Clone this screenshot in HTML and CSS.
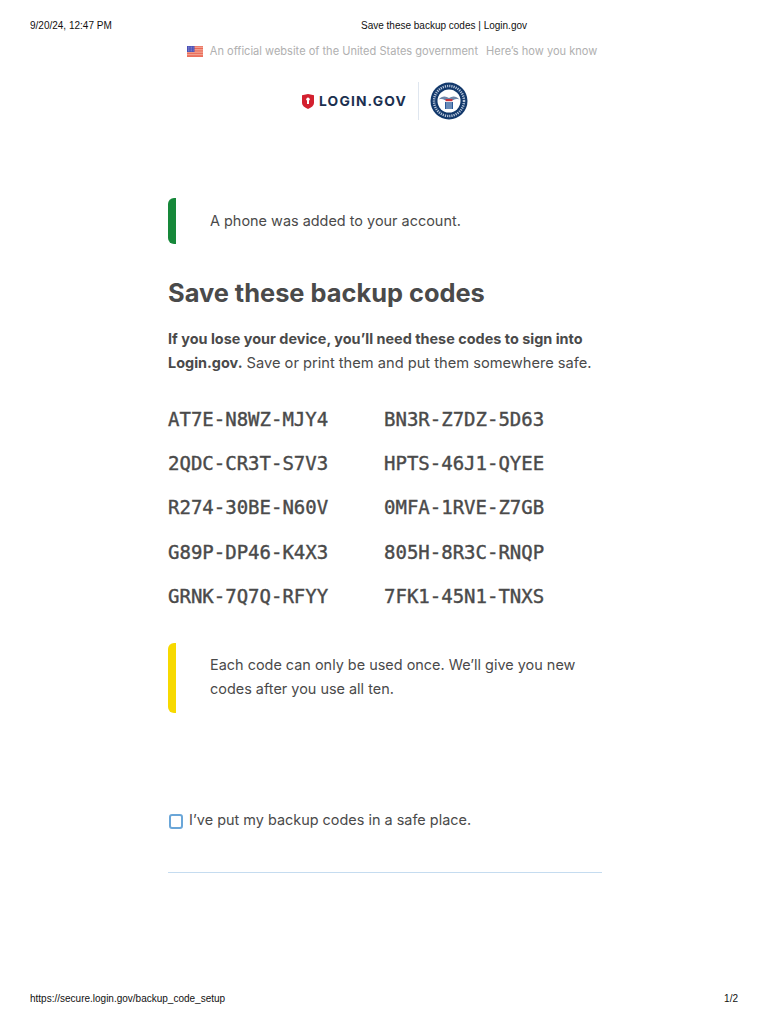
FILE: index.html
```html
<!DOCTYPE html>
<html lang="en">
<head>
<meta charset="utf-8">
<title>Save these backup codes | Login.gov</title>
<link rel="stylesheet" href="styles.css">
</head>
<body>
<div class="page">
  <header class="print-head">
    <span class="print-date">9/20/24, 12:47 PM</span>
    <span class="print-title">Save these backup codes | Login.gov</span>
  </header>
  <div class="banner">
    <svg class="flag" width="16" height="11" viewBox="0 0 16 11">
      <rect width="16" height="11" fill="#f6b7a8"/>
      <path d="M0 .8h16M0 2.500h16M0 4.200h16M0 5.900h16M0 7.600h16M0 9.300h16M0 10.600h16" stroke="#e8604c" stroke-width=".9"/>
      <rect width="7.500" height="6" fill="#4a4fb5"/>
      <path d="M1 1.200h5.500M1 3h5.500M1 4.800h5.500" stroke="#b9bce8" stroke-width=".7" stroke-dasharray=".8 .8"/>
    </svg>
    <span>An official website of the United States government</span>
    <span>Here’s how you know</span>
  </div>
  <div class="logos">
    <div class="login-logo">
      <svg width="12" height="15" viewBox="0 0 12 15">
        <path d="M0 1.200 6 0l6 1.200V9c0 2.600-2.600 4.600-6 6-3.400-1.400-6-3.400-6-6Z" fill="#d3202f"/>
        <circle cx="6" cy="5.200" r="1.700" fill="#fff"/>
        <rect x="5" y="5.500" width="2" height="4.500" fill="#fff"/>
      </svg>
      <span class="login-word">LOGIN.GOV</span>
    </div>
    <div class="logo-rule"></div>
    <svg class="seal" width="38" height="38" viewBox="0 0 38 38">
      <circle cx="19" cy="19" r="18.500" fill="#12386b"/>
      <circle cx="19" cy="19" r="11.500" fill="#fff"/>
      <circle cx="19" cy="19" r="15" fill="none" stroke="#b8c6da" stroke-width="2.500" stroke-dasharray="1.200 1"/>
      <path d="M8.500 17.500c3-3.500 7-4 10.500-1.500 3.500-2.500 7.500-2 10.500 1.500-3-.8-4.500-.4-6 .5H14.500c-1.500-.9-3-1.300-6-.5Z" fill="#6f86a8"/>
      <rect x="15.500" y="17" width="7" height="2.200" fill="#c8323c"/>
      <rect x="15" y="20" width="8" height="7" fill="#2a5a9a"/>
      <path d="M17 20v7M19 20v7M21 20v7" stroke="#fff" stroke-width=".6"/>
    </svg>
  </div>
  <main class="content">
    <div class="alert alert-success">
      <p>A phone was added to your account.</p>
    </div>
    <h1>Save these backup codes</h1>
    <p class="lead"><strong>If you lose your device, you’ll need these codes to sign into Login.gov.</strong> Save or print them and put them somewhere safe.</p>
    <div class="codes">
      <span>AT7E-N8WZ-MJY4</span><span>BN3R-Z7DZ-5D63</span>
      <span>2QDC-CR3T-S7V3</span><span>HPTS-46J1-QYEE</span>
      <span>R274-30BE-N60V</span><span>0MFA-1RVE-Z7GB</span>
      <span>G89P-DP46-K4X3</span><span>805H-8R3C-RNQP</span>
      <span>GRNK-7Q7Q-RFYY</span><span>7FK1-45N1-TNXS</span>
    </div>
    <div class="alert alert-warning">
      <p>Each code can only be used once. We’ll give you new codes after you use all ten.</p>
    </div>
    <label class="check">
      <span class="box"></span>
      <span>I’ve put my backup codes in a safe place.</span>
    </label>
    <div class="rule"></div>
  </main>
  <footer class="print-foot">
    <span>https://secure.login.gov/backup_code_setup</span>
    <span>1/2</span>
  </footer>
</div>
</body>
</html>
```
FILE: styles.css
```css
* { box-sizing: border-box; }
html, body { margin: 0; padding: 0; background: #fff; }
.page {
  width: 768px;
  height: 1024px;
  display: flex;
  flex-direction: column;
  font-family: Inter, "Liberation Sans", sans-serif;
  color: #4a4a4a;
  overflow: hidden;
}
.print-head {
  display: grid;
  grid-template-columns: 1fr;
  padding: 19px 30px 0;
  height: 42px;
  font: 10px/13px "Liberation Sans", Arial, sans-serif;
  color: #111;
}
.print-date, .print-title { grid-area: 1 / 1; }
.print-title { justify-self: center; transform: translateX(60px); }
.banner {
  display: flex;
  align-items: center;
  justify-content: center;
  gap: 8px;
  height: 18px;
  margin-left: 16px;
  font-size: 11.050px;
  color: #b0b0b0;
}
.flag { margin-right: -1px; }
.logos {
  display: flex;
  align-items: center;
  justify-content: center;
  gap: 11px;
  margin-top: 22px;
  height: 38px;
  margin-left: 2px;
}
.login-logo { display: flex; align-items: center; gap: 5px; }
.login-word {
  font-size: 13.800px;
  font-weight: 700;
  letter-spacing: 1.150px;
  color: #1b2f4f;
}
.logo-rule { width: 1px; height: 38px; background: #dfe6ef; }
.content {
  width: 434px;
  margin-left: 168px;
  flex: 1;
  display: flex;
  flex-direction: column;
}
.alert {
  border-left: 8px solid;
  border-radius: 6px;
  font-size: 14.450px;
  line-height: 24px;
}
.alert p { margin: 0; }
.alert-success { border-color: #16883a; margin-top: 78px; padding: 10.500px 0 11.500px 34px; height: 46px; }
.alert-warning { border-color: #f7d900; margin-top: 25.300px; padding: 10px 0 12px 34px; height: 70px; }
h1 {
  font-size: 25.400px;
  line-height: 32px;
  font-weight: 700;
  margin: 33px 0 0;
}
.lead {
  margin: 17.500px 0 0;
  font-size: 14.650px;
  line-height: 24px;
}
.lead strong { font-size: 14.450px; }
.codes {
  display: grid;
  grid-template-columns: 216px 216px;
  grid-auto-rows: 44.300px;
  margin-top: 22.200px;
  font: 400 19px/44px "DejaVu Sans Mono", monospace;
  -webkit-text-stroke: .4px #4a4a4a;
  color: #4a4a4a;
}
.check {
  display: flex;
  align-items: center;
  gap: 6px;
  margin-top: 95px;
  font-size: 14.450px;
  line-height: 24px;
}
.box {
  width: 14px;
  height: 15px;
  margin-left: 1px;
  border: 2px solid #6aa6d8;
  border-radius: 3px;
  margin-top: 2px;
}
.rule { height: 1px; background: #c5dcf0; margin-top: 40px; }
.print-foot {
  display: flex;
  justify-content: space-between;
  padding: 0 30px 19px;
  font: 10px/13px "Liberation Sans", Arial, sans-serif;
  color: #111;
}
```
